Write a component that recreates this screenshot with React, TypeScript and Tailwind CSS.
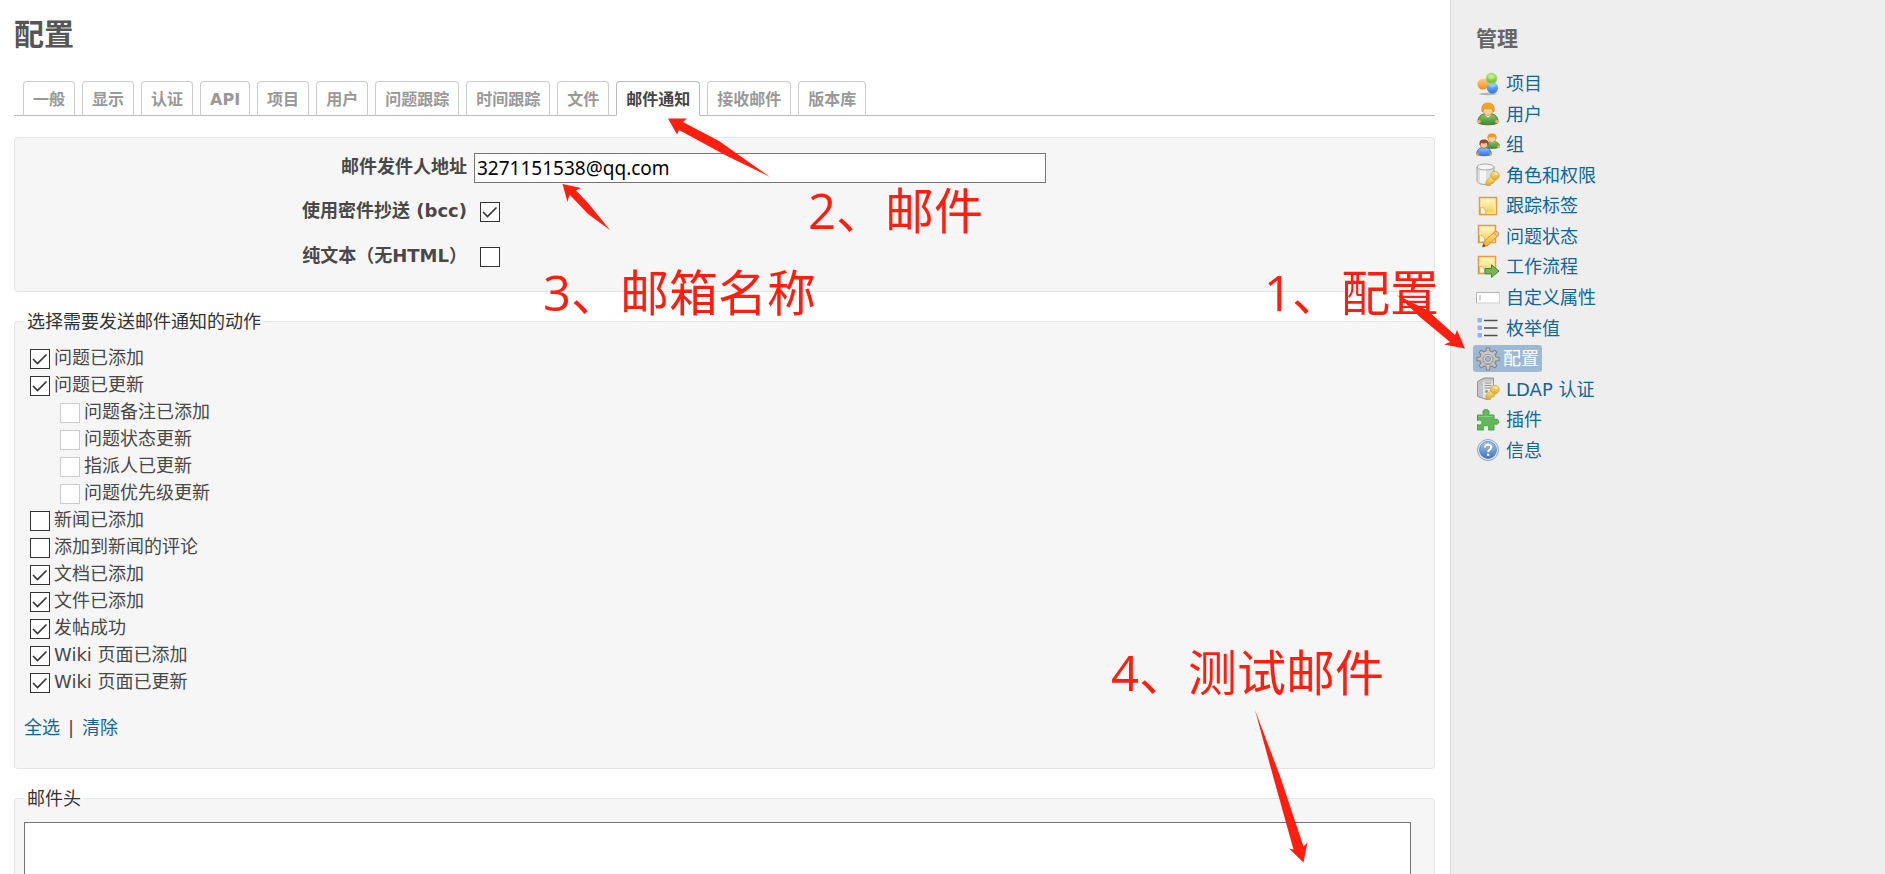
import { useState } from "react"
import type { ReactNode } from "react"

const tabs = [
  "一般",
  "显示",
  "认证",
  "API",
  "项目",
  "用户",
  "问题跟踪",
  "时间跟踪",
  "文件",
  "邮件通知",
  "接收邮件",
  "版本库",
]

const events = [
  { name: "问题已添加", checked: true },
  { name: "问题已更新", checked: true },
  { name: "问题备注已添加", nested: true },
  { name: "问题状态更新", nested: true },
  { name: "指派人已更新", nested: true },
  { name: "问题优先级更新", nested: true },
  { name: "新闻已添加" },
  { name: "添加到新闻的评论" },
  { name: "文档已添加", checked: true },
  { name: "文件已添加", checked: true },
  { name: "发帖成功", checked: true },
  { name: "Wiki 页面已添加", checked: true },
  { name: "Wiki 页面已更新", checked: true },
]

function Icon({ children }: { children: ReactNode }) {
  return (
    <svg viewBox="0 0 24 24" className="size-6 shrink-0" aria-hidden="true">
      {children}
    </svg>
  )
}

/* Shared gradients for the sidebar icons */
function IconDefs() {
  const stops: [string, string, string][] = [
    ["orange", "#ffd08a", "#f58a1f"],
    ["green", "#b9e87a", "#6ac21c"],
    ["blue", "#8fc0ff", "#2b74e8"],
    ["shirt", "#8cc56c", "#3f8a2c"],
    ["note", "#fff6c4", "#f3cf4e"],
    ["key", "#ffe79a", "#e8a821"],
    ["puzzle", "#63bd5c", "#62b65b"],
    ["help", "#a9c8ec", "#4174b8"],
    ["gear", "#d2d2d2", "#a6a6a6"],
  ]
  return (
    <svg width="0" height="0" className="absolute" aria-hidden="true">
      <defs>
        {stops.map(([id, from, to]) => (
          <linearGradient key={id} id={id} x1="0" y1="0" x2="0" y2="1">
            <stop offset="0" stopColor={from} />
            <stop offset="1" stopColor={to} />
          </linearGradient>
        ))}
      </defs>
    </svg>
  )
}

function ProjectsIcon() {
  return (
    <Icon>
      <ellipse cx="12" cy="22" rx="9" ry="1.2" fill="#999" opacity="0.7" />
      <circle cx="7" cy="12" r="5.6" fill="url(#orange)" />
      <circle cx="15.5" cy="6.5" r="5.4" fill="url(#green)" stroke="#8fd24a" strokeWidth="0.6" />
      <circle cx="16.5" cy="16" r="5.6" fill="url(#blue)" />
      <ellipse cx="15.3" cy="5" rx="3" ry="2" fill="#fff" opacity="0.35" />
      <ellipse cx="16.3" cy="13.6" rx="3.4" ry="1.8" fill="#fff" opacity="0.3" />
    </Icon>
  )
}

function UserIcon() {
  return (
    <Icon>
      <path d="M2 20.500c-.4-4 1.500-7 5.500-8.500h9c4 1.500 5.900 4.500 5.500 8.500-2 3-18 3-20 0z" fill="url(#shirt)" stroke="#3c7d2c" />
      <circle cx="3" cy="19.500" r="1.800" fill="#efa96c" />
      <circle cx="21" cy="19.500" r="1.800" fill="#efa96c" />
      <path d="M8.500 12.500l3.500 3.500 3.500-3.500z" fill="#f7e3c8" />
      <circle cx="12" cy="8.500" r="4.800" fill="#fbd3a2" stroke="#d98b3a" strokeWidth="0.800" />
      <path d="M6 10C5 4 7 1 12 1s7 3 6 9c-1.200-.5-1.800-2-1.800-3.700-2.500.7-5.900.7-8.400 0C7.800 8 7.200 9.500 6 10z" fill="#f3a51c" stroke="#d98613" strokeWidth="0.600" />
    </Icon>
  )
}

function GroupIcon() {
  return (
    <Icon>
      <path d="M10 15c0-4 2-6 4.500-6.500h4C22 9 23.800 11 23.500 14c-2 1.600-11 2-13.500 1z" fill="url(#shirt)" stroke="#4a8a38" strokeWidth="0.800" />
      <circle cx="22.500" cy="13.500" r="1.300" fill="#efa96c" />
      <circle cx="16" cy="5.500" r="3.800" fill="#fbd3a2" stroke="#d98b3a" strokeWidth="0.700" />
      <path d="M11.500 6C11 2 12.500.5 16 .5s5 1.500 4.500 5.500c-1 0-1.500-1-1.500-2-2 .6-4 .6-6 0 0 1-.5 2-1.500 2z" fill="#e89a25" />
      <path d="M.8 21.500c-.3-4 1.700-6 4.700-6.800h5c3 .8 5 2.800 4.700 6.800-2 1.600-12.400 1.600-14.400 0z" fill="url(#blue)" stroke="#2f62b8" strokeWidth="0.800" />
      <circle cx="1.600" cy="21" r="1.500" fill="#e8935c" />
      <circle cx="14.600" cy="21" r="1.500" fill="#e8935c" />
      <circle cx="8" cy="11.500" r="3.800" fill="#f7c398" stroke="#a0603a" strokeWidth="0.700" />
      <path d="M3.500 12C3 8 4.500 6.500 8 6.500s5 1.500 4.500 5.500c-1 0-1.500-1-1.500-2-2 .6-4 .6-6 0 0 1-.5 2-1.500 2z" fill="#8d4f35" />
    </Icon>
  )
}

function KeyShape() {
  return (
    <>
      <path d="M15.500 13l-5.500 5.500v3.700l4.300.3.500-2.200 2.200-.3 3-3.800z" fill="url(#key)" stroke="#cf8f1c" strokeWidth="0.700" />
      <circle cx="19" cy="12.500" r="4.200" fill="url(#key)" stroke="#dc9d20" strokeWidth="0.800" />
      <circle cx="20.500" cy="11" r="1.100" fill="#fffbe6" />
    </>
  )
}

function RolesIcon() {
  return (
    <Icon>
      <path d="M1 4v13.500C1 20 4.500 21.500 9.500 21.500S18 20 18 17.500V4z" fill="#dedede" stroke="#a2a2a2" />
      <path d="M4 7v12.500c2 .8 4 1 6 .8V7z" fill="#fff" opacity="0.700" />
      <ellipse cx="9.500" cy="4" rx="8.500" ry="3" fill="#f6f6f6" stroke="#a8a8a8" />
      <KeyShape />
    </Icon>
  )
}

function Note() {
  return (
    <>
      <path d="M2.500 1.500h17v17h-17z" fill="#ffefb5" stroke="#eb9a3c" strokeWidth="1.500" />
      <path d="M5 4h12.500v12.500H8L5 13.500z" fill="url(#note)" />
      <path d="M3.500 11.500c3 0 5 1 5.500 6.500H3.500z" fill="#fffbe8" stroke="#dda23e" strokeWidth="0.800" />
    </>
  )
}

function TrackersIcon() {
  return (
    <Icon>
      <g transform="translate(1 2)">
        <Note />
      </g>
    </Icon>
  )
}

function StatusIcon() {
  return (
    <Icon>
      <Note />
      <path d="M8 17.500L18.500 8c2-1.500 5 1.200 3.600 3.400L12 21.500 6.500 23z" fill="url(#key)" stroke="#d08e22" strokeWidth="0.900" />
      <path d="M17.500 9l3.600 3.500 1.600-2c.5-2-1.700-3.700-3.400-3z" fill="#f0bd8c" stroke="#d08e22" strokeWidth="0.700" />
      <path d="M6.500 23l1-3.300 2.200 2.300z" fill="#5a4630" />
    </Icon>
  )
}

function WorkflowIcon() {
  return (
    <Icon>
      <Note />
      <path d="M9 13.500h6.500v-3.700l7.500 6.200-7.500 6.500v-3.700H9z" fill="#79b457" stroke="#3f8a35" />
    </Icon>
  )
}

function FieldsIcon() {
  return (
    <Icon>
      <rect x="0.500" y="6.500" width="23" height="10.500" fill="#fff" stroke="#d2d2d2" />
      <path d="M.5 17V6.500h23" fill="none" stroke="#b4b4b4" />
      <path d="M4 9v5.500" stroke="#aaa" />
    </Icon>
  )
}

function EnumIcon() {
  return (
    <Icon>
      {[2, 9.5, 17].map((y) => (
        <g key={y}>
          <rect x="1.500" y={y} width="4.500" height="4.500" rx="0.800" fill="#8db4f2" />
          <path d={`M8 ${y + 2.5}h13.500`} stroke="#4c4c4c" strokeWidth="1.500" />
        </g>
      ))}
    </Icon>
  )
}

function GearIcon() {
  const teeth = [0, 45, 90, 135, 180, 225, 270, 315]
  return (
    <Icon>
      {/* dark outline first, then the lighter body over it */}
      <g fill="#7d7d7d">
        {teeth.map((deg) => (
          <path key={deg} d="M9.200 6L10 .5h4l.8 5.500z" transform={`rotate(${deg} 12 12)`} />
        ))}
        <circle cx="12" cy="12" r="8.500" />
      </g>
      <g fill="url(#gear)">
        <circle cx="12" cy="12" r="7.700" />
      </g>
      <g fill="#c4c4c4">
        {teeth.map((deg) => (
          <path key={deg} d="M10.200 6l.6-4.600h2.400l.6 4.600z" transform={`rotate(${deg} 12 12)`} />
        ))}
      </g>
      <circle cx="12" cy="12" r="4.800" fill="#d4d4d4" stroke="#989898" />
      <circle cx="12" cy="12" r="2.600" fill="#9db9d5" stroke="#888" strokeWidth="0.800" />
    </Icon>
  )
}

function LdapIcon() {
  return (
    <Icon>
      <path d="M1.500 4.500L8 1h9.500v15L11 22.500l-9.500-3z" fill="#c4c4c4" stroke="#929292" />
      <path d="M7 4.500h10V17l-6 5-4-1.500z" fill="#e4e4e4" />
      <path d="M8.500 6h7M8.500 8.500h7M8.500 11h7" stroke="#969696" strokeWidth="1.200" />
      <circle cx="10.500" cy="14.500" r="1.400" fill="#77b540" />
      <KeyShape />
    </Icon>
  )
}

function PluginIcon() {
  return (
    <Icon>
      <path
        d="M1.500 7h6.200C6 4 7 1.500 10 1.500S14 4 12.300 7H18v4.800c2.500-1.300 4.800-.3 4.800 2s-2.300 3.200-4.800 2V22h-5.500c1-3-.2-4.500-2.500-4.500S6.500 19 7.500 22h-6v-5.500c3 1.200 4.500.2 4.500-2s-1.500-3.200-4.500-2z"
        fill="url(#puzzle)"
        stroke="#4d9f4a"
      />
      <path d="M3 8.500h13.500" stroke="#9bdb90" opacity="0.700" />
    </Icon>
  )
}

function InfoIcon() {
  return (
    <Icon>
      <circle cx="12" cy="12" r="10.500" fill="#e3ecf6" stroke="#8ba6c8" />
      <circle cx="12" cy="12" r="8.500" fill="url(#help)" stroke="#5580b8" strokeWidth="0.800" />
      <path d="M9 9.500C9 7.500 10.200 6.700 12 6.700s3.200 1 3.200 2.700c0 2.200-3 2.300-3 4.600" fill="none" stroke="#fff" strokeWidth="2" />
      <circle cx="12.200" cy="16.800" r="1.300" fill="#fff" />
    </Icon>
  )
}

const menu = [
  { name: "项目", icon: <ProjectsIcon /> },
  { name: "用户", icon: <UserIcon /> },
  { name: "组", icon: <GroupIcon /> },
  { name: "角色和权限", icon: <RolesIcon /> },
  { name: "跟踪标签", icon: <TrackersIcon /> },
  { name: "问题状态", icon: <StatusIcon /> },
  { name: "工作流程", icon: <WorkflowIcon /> },
  { name: "自定义属性", icon: <FieldsIcon /> },
  { name: "枚举值", icon: <EnumIcon /> },
  { name: "配置", icon: <GearIcon />, selected: true },
  { name: "LDAP 认证", icon: <LdapIcon /> },
  { name: "插件", icon: <PluginIcon /> },
  { name: "信息", icon: <InfoIcon /> },
]

function Checkbox({ id, checked, disabled, onChange }: {
  id: string
  checked: boolean
  disabled?: boolean
  onChange: () => void
}) {
  return (
    <span className="relative size-5 shrink-0">
      <input
        id={id}
        type="checkbox"
        checked={checked}
        disabled={disabled}
        onChange={onChange}
        className="block size-5 appearance-none border border-[#333] bg-white disabled:border-[#ccc]"
      />
      {checked && (
        <svg viewBox="0 0 20 20" className="pointer-events-none absolute inset-0 size-5">
          <path d="M3 10l4.500 4.500L16.500 5.500" fill="none" stroke="#333" strokeWidth="1.600" />
        </svg>
      )}
    </span>
  )
}

function Sidebar() {
  return (
    <aside className="w-[435px] shrink-0 border-l border-[#ddd] bg-[#eee] pl-[25px] pt-6">
      <h3 className="text-[21px] leading-[30px] font-bold text-[#666]">管理</h3>
      <ul className="mt-4 flex h-[394px] flex-col justify-between">
        {menu.map((item) => (
          <li key={item.name} className="flex">
            <a
              href="#"
              className={
                item.selected
                  ? "-ml-[3px] flex h-[27px] items-center gap-[3px] rounded-[3px] bg-[#9db9d5] px-[3px] text-white"
                  : "flex h-[27px] items-center gap-[6px] text-[#169] hover:underline"
              }
            >
              {item.icon}
              {item.name}
            </a>
          </li>
        ))}
      </ul>
    </aside>
  )
}

/* Red callouts drawn over the page */
function Annotations() {
  return (
    <div className="pointer-events-none absolute inset-0 overflow-hidden font-['Open_Sans','Noto_Sans_CJK_SC',sans-serif] text-[49px] leading-[60px] whitespace-nowrap text-[#ff1f10]">
      <span className="absolute left-[1264px] top-[262px]">1、配置</span>
      <span className="absolute left-[808px] top-[180px]">2、邮件</span>
      <span className="absolute left-[543px] top-[262px]">3、邮箱名称</span>
      <span className="absolute left-[1111px] top-[642px]">4、测试邮件</span>
      <svg width="1885" height="874" className="absolute left-0 top-0" fill="#ff1f10">
        <path d="M1397 295L1427 310 1455 335 1457 330 1465 348.500 1444 344.500 1450 342 1420 317z" />
        <path d="M668 118.500L687 118.500 683 122 719 141 770 177 727 156 679 130 677 134.500z" />
        <path d="M562.500 184L581 188 576 190.500 588 203 610 230 588 214 569.500 194.500 567.500 202z" />
        <path d="M1255 710L1280 776 1303.500 846.500 1307.500 842.500 1303.500 862.500 1289 848.500 1293.500 849.500 1273 776z" />
      </svg>
    </div>
  )
}

export default function App() {
  const [email, setEmail] = useState("3271151538@qq.com")
  const [bcc, setBcc] = useState(true)
  const [plain, setPlain] = useState(false)
  const [checked, setChecked] = useState(events.map((e) => !!e.checked))

  const toggle = (index: number) => setChecked(checked.map((c, i) => (i === index ? !c : c)))
  const setAll = (value: boolean) => setChecked(events.map((e) => !e.nested && value))

  return (
    <div className="relative flex h-screen overflow-hidden bg-white font-['DejaVu_Sans','Noto_Sans_CJK_SC',sans-serif] text-[18px] leading-[27px] text-[#484848]">
      <IconDefs />
      <main className="min-w-0 flex-1 pt-3 pr-[15px] pl-[14px]">
        <h2 className="text-[30px] leading-[45px] font-bold text-[#555]">配置</h2>

        {/* Tabs */}
        <nav className="mt-6 border-b border-[#bbb] pl-[9px]">
          <ul className="-mb-px flex gap-[7px]">
            {tabs.map((tab) => (
              <li key={tab}>
                <a
                  href="#"
                  className={
                    tab === "邮件通知"
                      ? "block h-[35px] rounded-t-[4px] border border-[#bbb] border-b-white bg-white px-[9px] text-[16px] leading-[35px] font-bold text-[#444]"
                      : "block h-[35px] rounded-t-[4px] border border-[#ccc] border-b-[#bbb] bg-white px-[9px] text-[16px] leading-[35px] font-bold text-[#999]"
                  }
                >
                  {tab}
                </a>
              </li>
            ))}
          </ul>
        </nav>

        {/* Sender settings */}
        <div className="mt-[21px] rounded-[4px] border border-[#e4e4e4] bg-[#f6f6f6] pt-[15px] pb-[19px] font-bold">
          <div className="flex h-[30px] items-center">
            <label htmlFor="mail-from" className="w-[452px] pb-1 text-right">邮件发件人地址</label>
            <input
              id="mail-from"
              type="text"
              value={email}
              onChange={(e) => setEmail(e.target.value)}
              className="ml-[7px] h-[30px] w-[572px] border border-[#767676] bg-white px-[2px] font-['Noto_Sans',sans-serif] text-[19px] font-normal text-black"
            />
          </div>
          <div className="mt-[14px] flex h-[30px] items-center">
            <label htmlFor="bcc" className="mr-[13px] w-[452px] pb-1 text-right">使用密件抄送 (bcc)</label>
            <Checkbox id="bcc" checked={bcc} onChange={() => setBcc(!bcc)} />
          </div>
          <div className="mt-[15px] flex h-[30px] items-center">
            <label htmlFor="plain" className="mr-[13px] w-[452px] pb-1 text-right">纯文本（无HTML）</label>
            <Checkbox id="plain" checked={plain} onChange={() => setPlain(!plain)} />
          </div>
        </div>

        {/* Notified events */}
        <fieldset className="mt-4 rounded-[4px] border border-[#e4e4e4] bg-[#f6f6f6] px-[9px] pb-[27px]">
          <legend className="px-[3px] text-[#333]">选择需要发送邮件通知的动作</legend>
          <div className="mt-[10px] ml-[6px]">
            {events.map((event, i) => (
              <div key={event.name} className={event.nested ? "ml-[30px] flex h-[27px] items-center gap-1" : "flex h-[27px] items-center gap-1"}>
                <Checkbox id={`event-${i}`} checked={checked[i]} disabled={event.nested} onChange={() => toggle(i)} />
                <label htmlFor={`event-${i}`} className="pb-[2px]">{event.name}</label>
              </div>
            ))}
          </div>
          <p className="mt-[18px] flex gap-2">
            <a href="#" onClick={() => setAll(true)} className="text-[#169] hover:underline">全选</a>
            <span>|</span>
            <a href="#" onClick={() => setAll(false)} className="text-[#169] hover:underline">清除</a>
          </p>
        </fieldset>

        {/* Email header */}
        <fieldset className="mt-4 rounded-[4px] border border-[#e4e4e4] bg-[#f6f6f6] px-[9px] pb-[15px]">
          <legend className="px-[3px] text-[#333]">邮件头</legend>
          <textarea aria-label="邮件头" rows={5} className="mt-[10px] block w-[99%] resize-none border border-[#767676] bg-white p-1" />
        </fieldset>
      </main>

      <Sidebar />
      <Annotations />
    </div>
  )
}
